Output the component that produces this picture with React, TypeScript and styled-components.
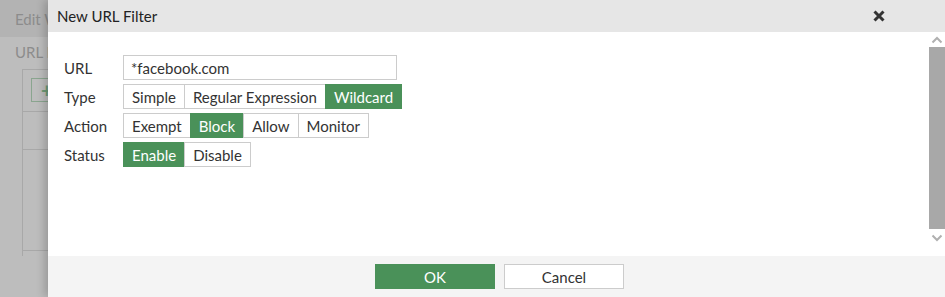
import * as React from 'react';
import styled, { createGlobalStyle } from 'styled-components';

const GlobalStyle = createGlobalStyle`
  html, body {
    margin: 0;
    padding: 0;
    width: 945px;
    height: 297px;
    overflow: hidden;
    font-family: Lato, 'Open Sans', sans-serif;
  }
`;

const Page = styled.div`
  position: relative;
  width: 945px;
  height: 297px;
  overflow: hidden;
  background: #bdbdbd;
`;

const Backdrop = styled.div`
  width: 48px;
  height: 100%;
  overflow: hidden;
`;

const PageHeader = styled.div`
  height: 37px;
  background: #b3b3b3;
  color: #8c8c8c;
  font-size: 15px;
  display: flex;
  align-items: center;
  padding-left: 15px;
  white-space: nowrap;
`;

const PageSection = styled.div`
  color: #8c8c8c;
  font-size: 15px;
  padding: 6px 0 0 15px;
  white-space: nowrap;
`;

const TableBox = styled.div`
  margin: 8px 0 0 22px;
  width: 200px;
  height: 186px;
  border-left: 1px solid #a8a8a8;
  border-top: 1px solid #a8a8a8;
  display: flex;
  flex-direction: column;
`;

const Toolbar = styled.div`
  height: 42px;
  border-bottom: 1px solid #a8a8a8;
  padding: 8px 0 0 8px;
  box-sizing: border-box;
`;

const AddButton = styled.div`
  width: 40px;
  height: 24px;
  border: 1px solid #8aa58f;
  color: #6e9a76;
  font-size: 20px;
  font-weight: bold;
  line-height: 22px;
  padding-left: 9px;
  box-sizing: border-box;
`;

const TableRow = styled.div<{ $h: number }>`
  height: ${(p) => p.$h}px;
  border-bottom: 1px solid #a8a8a8;
`;

const Dialog = styled.div`
  position: absolute;
  left: 48px;
  top: 0;
  right: 0;
  bottom: 0;
  display: flex;
  flex-direction: column;
  background: #fff;
  box-shadow: -4px 0 8px rgba(0, 0, 0, 0.18);
`;

const DialogHeader = styled.div`
  height: 32px;
  flex-shrink: 0;
  background: #e6e6e6;
  display: flex;
  align-items: center;
  justify-content: space-between;
  padding: 0 60px 0 9px;
  font-size: 15px;
  color: #222;
`;

const CloseButton = styled.span`
  display: flex;
  cursor: pointer;
`;

const DialogBody = styled.div`
  flex: 1;
  display: flex;
`;

const Form = styled.div`
  flex: 1;
  padding: 23px 0 0 16px;
  display: flex;
  flex-direction: column;
  gap: 4px;
`;

const Row = styled.div`
  display: flex;
  align-items: center;
  height: 25px;
`;

const Label = styled.div`
  width: 59px;
  font-size: 15px;
  color: #333;
`;

const TextInput = styled.div`
  width: 274px;
  height: 25px;
  box-sizing: border-box;
  border: 1px solid #ccc;
  padding-left: 7px;
  display: flex;
  align-items: center;
  font-size: 15px;
  color: #333;
`;

const Segmented = styled.div`
  display: flex;
  height: 25px;
`;

const Segment = styled.div<{ $active?: boolean }>`
  display: flex;
  align-items: center;
  box-sizing: border-box;
  padding: 0 8px;
  font-size: 15px;
  border: 1px solid ${(p) => (p.$active ? '#4a9159' : '#ccc')};
  margin-left: -1px;
  background: ${(p) => (p.$active ? '#4a9159' : '#fff')};
  color: ${(p) => (p.$active ? '#fff' : '#333')};
  cursor: pointer;
  &:first-child {
    margin-left: 0;
  }
`;

const ScrollTrack = styled.div`
  width: 16px;
  display: flex;
  flex-direction: column;
  align-items: center;
  padding-top: 4px;
  box-sizing: border-box;
`;

const ScrollThumb = styled.div`
  width: 100%;
  height: 182px;
  margin: 3px 0 5px;
  background: #a8a8a8;
`;

const Footer = styled.div`
  height: 41px;
  flex-shrink: 0;
  background: #f4f4f4;
  display: flex;
  justify-content: center;
  gap: 9px;
  padding: 8px 0 0 6px;
  box-sizing: border-box;
`;

const FooterButton = styled.div<{ $primary?: boolean }>`
  width: 120px;
  height: 25px;
  box-sizing: border-box;
  display: flex;
  align-items: center;
  justify-content: center;
  font-size: 15px;
  border: 1px solid ${(p) => (p.$primary ? '#4a9159' : '#ccc')};
  background: ${(p) => (p.$primary ? '#4a9159' : '#fff')};
  color: ${(p) => (p.$primary ? '#fff' : '#333')};
`;

const Chevron = ({ up }: { up?: boolean }) => (
  <svg width="12" height="8" viewBox="0 0 12 8">
    <path
      d={up ? 'M1.5 6.5 L6 2 L10.5 6.5' : 'M1.5 1.5 L6 6 L10.5 1.5'}
      fill="none"
      stroke="#b0b0b0"
      strokeWidth="2"
    />
  </svg>
);

const types = ['Simple', 'Regular Expression', 'Wildcard'];
const actions = ['Exempt', 'Block', 'Allow', 'Monitor'];
const statuses = ['Enable', 'Disable'];

const App = (): JSX.Element => {
  const [type, setType] = React.useState('Wildcard');
  const [action, setAction] = React.useState('Block');
  const [status, setStatus] = React.useState('Enable');

  return (
    <Page>
      <GlobalStyle />
      <Backdrop>
        <PageHeader>{'Edit Web Filter Profile'}</PageHeader>
        <PageSection>{'URL Filter'}</PageSection>
        <TableBox>
          <Toolbar>
            <AddButton>{'+'}</AddButton>
          </Toolbar>
          <TableRow $h={37} />
          <TableRow $h={100} />
        </TableBox>
      </Backdrop>

      <Dialog>
        <DialogHeader>
          <span>{'New URL Filter'}</span>
          <CloseButton>
            <svg width="12" height="12" viewBox="0 0 12 12">
              <path d="M1.5 1.5 L10.5 10.5 M10.5 1.5 L1.5 10.5" stroke="#333" strokeWidth="3" />
            </svg>
          </CloseButton>
        </DialogHeader>
        <DialogBody>
          <Form>
            <Row>
              <Label>{'URL'}</Label>
              <TextInput>{'*facebook.com'}</TextInput>
            </Row>
            <Row>
              <Label>{'Type'}</Label>
              <Segmented>
                {types.map((t) => (
                  <Segment key={t} $active={t === type} onClick={() => setType(t)}>{t}</Segment>
                ))}
              </Segmented>
            </Row>
            <Row>
              <Label>{'Action'}</Label>
              <Segmented>
                {actions.map((a) => (
                  <Segment key={a} $active={a === action} onClick={() => setAction(a)}>{a}</Segment>
                ))}
              </Segmented>
            </Row>
            <Row>
              <Label>{'Status'}</Label>
              <Segmented>
                {statuses.map((s) => (
                  <Segment key={s} $active={s === status} onClick={() => setStatus(s)}>{s}</Segment>
                ))}
              </Segmented>
            </Row>
          </Form>
          <ScrollTrack>
            <Chevron up />
            <ScrollThumb />
            <Chevron />
          </ScrollTrack>
        </DialogBody>
        <Footer>
          <FooterButton $primary>{'OK'}</FooterButton>
          <FooterButton>{'Cancel'}</FooterButton>
        </Footer>
      </Dialog>
    </Page>
  );
};

export default App;
